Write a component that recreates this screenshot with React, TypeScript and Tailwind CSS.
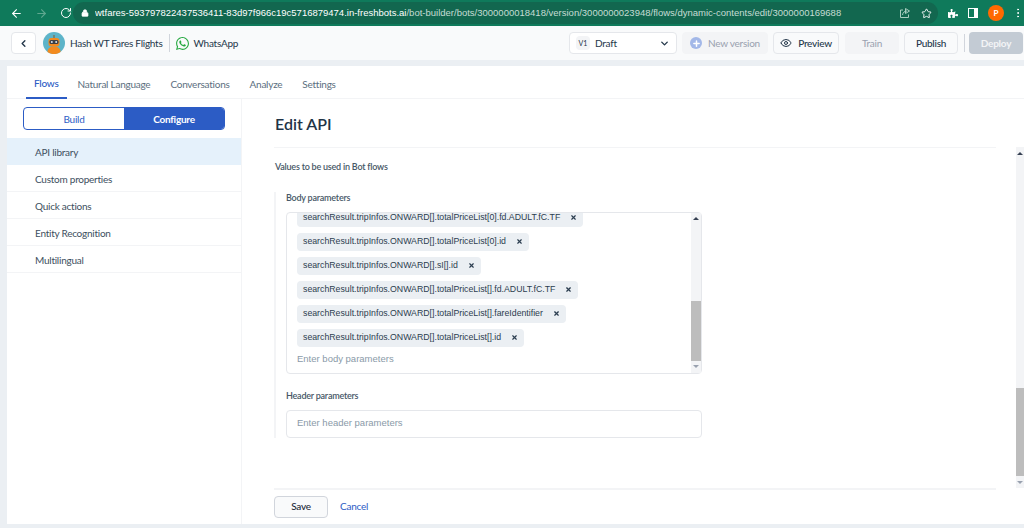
import React from 'react';
import { ArrowLeft, ArrowRight, ChevronDown, ChevronLeft, Eye, Lock, MoreVertical, Plus, RotateCw, Star, X } from 'lucide-react';
import { FaPuzzlePiece } from 'react-icons/fa';
import { SiWhatsapp } from 'react-icons/si';

const sans = { fontFamily: 'Lato, "Open Sans", sans-serif' };
const arial = { fontFamily: '"Liberation Sans", sans-serif' };

const chips = [
    'searchResult.tripInfos.ONWARD[].totalPriceList[0].fd.ADULT.fC.TF',
    'searchResult.tripInfos.ONWARD[].totalPriceList[0].id',
    'searchResult.tripInfos.ONWARD[].sI[].id',
    'searchResult.tripInfos.ONWARD[].totalPriceList[].fd.ADULT.fC.TF',
    'searchResult.tripInfos.ONWARD[].totalPriceList[].fareIdentifier',
    'searchResult.tripInfos.ONWARD[].totalPriceList[].id',
];

const sideItems = ['Custom properties', 'Quick actions', 'Entity Recognition', 'Multilingual'];

function ShareIcon() {
    return (
        <svg viewBox="0 0 12 12" className="h-3 w-3 shrink-0 text-[#a9cdbf]" fill="none" stroke="currentColor" strokeWidth="1">
            <path d="M4 3H1.5v7.5h8V7.5" />
            <path d="M3.5 8c.3-2.5 2-4 4.5-4M6.5 1.5 10.5 4 6.5 6.5z" />
        </svg>
    );
}

function BrowserBar() {
    return (
        <div className="flex h-6.5 items-center bg-[#0f7a5b] text-white">
            <div className="flex w-18.25 shrink-0 items-center gap-3 pl-2.5">
                <ArrowLeft size={13} />
                <ArrowRight size={13} className="text-[#5fa78f]" />
                <RotateCw size={12} />
            </div>
            <div className="flex h-5.5 min-w-0 flex-1 items-center rounded-full bg-[#12674f] pl-2 pr-1.5" style={arial}>
                <Lock size={8} className="mr-1.5 shrink-0" fill="white" />
                <div className="min-w-0 flex-1 truncate text-[9.5px] text-[#c5dcd4]">
                    <span className="text-white">wtfares-593797822437536411-83d97f966c19c5716879474.in-freshbots.ai</span>
                    /bot-builder/bots/3000000018418/version/3000000023948/flows/dynamic-contents/edit/3000000169688
                </div>
                <ShareIcon />
                <Star size={11} className="ml-2.5 shrink-0" />
            </div>
            <div className="flex w-21.5 shrink-0 items-center gap-2.5 pl-2.5">
                <FaPuzzlePiece size={11} />
                <div className="h-2.5 w-2.5 shrink-0 border border-r-4 border-white" />
                <div className="flex h-4 w-4 shrink-0 items-center justify-center rounded-full bg-orange-500 text-[8px] font-bold" style={sans}>P</div>
                <MoreVertical size={12} className="-ml-0.5 shrink-0" />
            </div>
        </div>
    );
}

function BotAvatar() {
    return (
        <svg viewBox="0 0 22 22" className="h-5.5 w-5.5">
            <circle cx="11" cy="11" r="11" fill="#5db4c9" />
            <path d="M4.5 20c0-3.5 2.5-5.5 6.500-5.500s6.500 2 6.500 5.500a11 11 0 0 1-13 0z" fill="#f28a1e" />
            <rect x="5.500" y="6" width="11" height="8.500" rx="3" fill="#f28a1e" />
            <rect x="6.500" y="8" width="9" height="4" rx="1.500" fill="#3b3f46" />
            <circle cx="8.800" cy="10" r="1" fill="#d9e4ea" />
            <circle cx="13.200" cy="10" r="1" fill="#d9e4ea" />
            <rect x="10.500" y="3" width="1" height="3" fill="#8a5a2a" />
        </svg>
    );
}

function TopBar() {
    return (
        <div className="flex h-8.5 items-center bg-gray-50 pl-2.75 pr-px text-[#24374a]" style={sans}>
            <button className="flex h-5.5 w-6.25 items-center justify-center rounded-sm border border-gray-200 bg-white">
                <ChevronLeft size={11} strokeWidth={3} />
            </button>
            <div className="ml-1.75 mr-1.25"><BotAvatar /></div>
            <span className="text-[10px] tracking-tight">Hash WT Fares Flights</span>
            <div className="mx-1.5 h-4.5 border-l border-gray-300" />
            <SiWhatsapp size={13} className="text-[#25a83f]" />
            <span className="ml-1.25 text-[10px] tracking-tight">WhatsApp</span>
            <div className="flex-1" />
            <div className="flex h-5.5 w-27 items-center rounded-sm border border-gray-200 bg-white px-1.5">
                <span className="flex h-3.5 w-3.5 items-center justify-center rounded-sm bg-gray-100 text-[7px]">V1</span>
                <span className="ml-1.25 flex-1 text-[10px] tracking-tight">Draft</span>
                <ChevronDown size={11} strokeWidth={3} />
            </div>
            <div className="ml-1.25 flex h-5.5 w-21.5 items-center justify-center gap-1.5 rounded-sm border border-gray-100 bg-gray-100 text-[10px] tracking-tight text-gray-400">
                <span className="flex h-3 w-3 items-center justify-center rounded-full bg-[#a3b8e8] text-white"><Plus size={9} strokeWidth={4} /></span>
                New version
            </div>
            <button className="ml-1.25 flex h-5.5 w-16.5 items-center justify-center gap-1.5 rounded-sm border border-gray-200 bg-gray-50 text-[10px] font-medium tracking-tight">
                <Eye size={12} />
                Preview
            </button>
            <div className="ml-1.5 flex h-5.5 w-13.5 items-center justify-center rounded-sm border border-gray-100 bg-gray-100 text-[10px] tracking-tight text-gray-400">Train</div>
            <button className="ml-1.25 flex h-5.5 w-13.5 items-center justify-center rounded-sm border border-gray-200 bg-gray-50 text-[10px] font-medium tracking-tight">Publish</button>
            <div className="ml-1.5 mr-1 h-4.5 border-l border-gray-300" />
            <div className="flex h-5.5 w-13.5 items-center justify-center rounded-sm bg-[#c3cbd4] text-[10px] font-bold tracking-tight text-gray-100">Deploy</div>
        </div>
    );
}

function Tabs() {
    return (
        <div className="flex h-8.25 shrink-0 items-stretch gap-5 border-b border-gray-100 pl-4.75 pt-1 text-[10px] tracking-tight text-[#5c6f80]" style={sans}>
            <div className="-mb-px -mr-2.25 flex items-center border-b-2 border-[#2c5cc5] px-2 font-medium text-[#2c5cc5]">Flows</div>
            <div className="flex items-center">Natural Language</div>
            <div className="flex items-center">Conversations</div>
            <div className="flex items-center">Analyze</div>
            <div className="flex items-center">Settings</div>
        </div>
    );
}

function Sidebar() {
    return (
        <div className="w-58.75 shrink-0 border-r border-gray-100 pt-2 text-[10px] tracking-tight text-[#3d4f60]" style={sans}>
            <div className="mx-4 flex h-5.75 overflow-hidden rounded-sm border border-[#2c5cc5]">
                <div className="flex flex-1 items-center justify-center pt-px text-[#2c5cc5]">Build</div>
                <div className="flex flex-1 items-center justify-center bg-[#2c5cc5] pt-px font-bold text-white">Configure</div>
            </div>
            <div className="mt-2 flex h-6.75 items-center bg-[#e5f1fb] pl-7 pt-0.5">API library</div>
            {sideItems.map((item) => (
                <div key={item} className="flex h-6.75 items-center border-b border-gray-100 pl-7 pt-0.5">{item}</div>
            ))}
        </div>
    );
}

function Chip({ label }: { label: string; }) {
    return (
        <div className="flex h-4.5 w-fit shrink-0 items-center gap-2.5 rounded-sm bg-[#ebeff3] px-1.5 text-[8.75px] text-[#2b3d4f]">
            {label}
            <X size={7} strokeWidth={4} />
        </div>
    );
}

function ScrollbarV({ wide }: { wide: boolean; }) {
    return (
        <div className={wide ? 'flex w-2.5 shrink-0 flex-col bg-gray-100' : 'flex w-2 shrink-0 flex-col bg-gray-100'}>
            <div className="flex h-3 items-center justify-center">
                <div className="border-x-[3px] border-b-[3px] border-x-transparent border-b-gray-700" />
            </div>
            <div className="flex flex-1 flex-col justify-end">
                <div className={wide ? 'h-15 bg-[#bdbdbd]' : 'h-22 bg-[#bdbdbd]'} />
            </div>
            <div className="flex h-3 items-center justify-center">
                <div className="border-x-[3px] border-t-[3px] border-x-transparent border-t-gray-400" />
            </div>
        </div>
    );
}

function Form() {
    return (
        <div className="flex-1 pl-8 pr-5" style={sans}>
            <h1 className="flex h-12 items-center pl-px pt-0.5 text-base font-semibold text-[#1f3447]">Edit API</h1>
            <div className="border-t border-gray-100 pl-px pt-3 text-[9px] font-semibold tracking-tight text-[#475867]">Values to be used in Bot flows</div>

            <div className="mt-4.5 w-107 border-l-2 border-gray-100 pl-2.5">
                <div className="text-[9px] font-semibold leading-3 tracking-tight text-[#475867]">Body parameters</div>
                <div className="mt-2 flex h-40.5 rounded-sm border border-gray-200">
                    <div className="flex min-w-0 flex-1 flex-col justify-end gap-1.5 overflow-hidden pb-2 pl-2.5" style={arial}>
                        {chips.map((chip) => <Chip key={chip} label={chip} />)}
                        <div className="text-[9.5px] leading-3 text-[#8a9aa8]">Enter body parameters</div>
                    </div>
                    <ScrollbarV wide />
                </div>
                <div className="mt-4 text-[9px] font-semibold leading-3 tracking-tight text-[#475867]">Header parameters</div>
                <div className="mt-2 flex h-7 items-center rounded-sm border border-gray-200 pl-2.5 text-[9.5px] text-[#8a9aa8]" style={arial}>
                    Enter header parameters
                </div>
            </div>

            <div className="mt-12.5 flex items-center gap-3 border-t-2 border-gray-100 pt-1.5">
                <button className="flex h-5.5 w-13.5 items-center justify-center rounded-sm border border-gray-300 bg-gray-50 text-[10px] font-medium tracking-tight text-gray-800">Save</button>
                <span className="text-[10px] tracking-tight text-[#2c5cc5]">Cancel</span>
            </div>
        </div>
    );
}

export default function App() {
    return (
        <div className="flex h-132 w-256 flex-col overflow-hidden bg-[#ebeff3]">
            <BrowserBar />
            <TopBar />
            <div className="mt-1.5 ml-1.75 flex flex-1 flex-col bg-white">
                <Tabs />
                <div className="flex flex-1">
                    <Sidebar />
                    <Form />
                    <div className="mt-12 mb-9 flex">
                        <ScrollbarV wide={false} />
                    </div>
                </div>
            </div>
            <div className="h-1" />
        </div>
    );
}
